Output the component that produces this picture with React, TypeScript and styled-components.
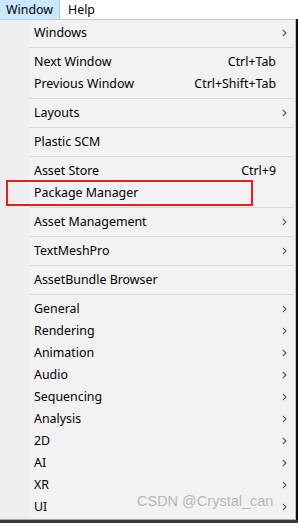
import styled, { createGlobalStyle } from "styled-components";

type Entry =
  | { kind: "item"; label: string; shortcut?: string; sub?: boolean; marked?: boolean }
  | { kind: "sep" };

const item = (label: string, opts: { shortcut?: string; sub?: boolean; marked?: boolean } = {}): Entry => ({
  kind: "item",
  label,
  ...opts,
});
const sep: Entry = { kind: "sep" };

const entries: Entry[] = [
  item("Windows", { sub: true }),
  sep,
  item("Next Window", { shortcut: "Ctrl+Tab" }),
  item("Previous Window", { shortcut: "Ctrl+Shift+Tab" }),
  sep,
  item("Layouts", { sub: true }),
  sep,
  item("Plastic SCM"),
  sep,
  item("Asset Store", { shortcut: "Ctrl+9" }),
  item("Package Manager", { marked: true }),
  sep,
  item("Asset Management", { sub: true }),
  sep,
  item("TextMeshPro", { sub: true }),
  sep,
  item("AssetBundle Browser"),
  sep,
  item("General", { sub: true }),
  item("Rendering", { sub: true }),
  item("Animation", { sub: true }),
  item("Audio", { sub: true }),
  item("Sequencing", { sub: true }),
  item("Analysis", { sub: true }),
  item("2D", { sub: true }),
  item("AI", { sub: true }),
  item("XR", { sub: true }),
  item("UI", { sub: true }),
];

const Chevron = () => (
  <svg width="5" height="8" viewBox="0 0 5 8">
    <path d="M0.8 0.8 L4 4 L0.8 7.2" fill="none" stroke="#555" strokeWidth="1.1" />
  </svg>
);

export default function App() {
  return (
    <>
      <GlobalStyle />
      <Screen>
        <MenuBar>
          <BarItem $active>Window</BarItem>
          <BarItem>Help</BarItem>
        </MenuBar>
        <Dropdown>
          {entries.map((e, i) =>
            e.kind === "sep" ? (
              <Separator key={i} />
            ) : (
              <Row key={i}>
                <Label>{e.label}</Label>
                {e.shortcut && <Shortcut>{e.shortcut}</Shortcut>}
                <Arrow>{e.sub && <Chevron />}</Arrow>
                {e.marked && <Highlight />}
              </Row>
            )
          )}
        </Dropdown>
        <Watermark>CSDN @Crystal_can</Watermark>
      </Screen>
    </>
  );
}

const GlobalStyle = createGlobalStyle`
  html, body {
    margin: 0;
    padding: 0;
    background: #2a2a2a;
  }
`;

const Screen = styled.div`
  position: relative;
  width: 298px;
  height: 523px;
  overflow: hidden;
  background: linear-gradient(to right, #f2f2f2 296px, #111 296px);
  font-family: "Noto Sans", "Open Sans", sans-serif;
  font-size: 12.4px;
  color: #000;
  display: flex;
  flex-direction: column;
  border-bottom: 3px solid #3a3a3a;
  box-sizing: border-box;
`;

const MenuBar = styled.div`
  height: 19px;
  background: #fff;
  display: flex;
  align-items: stretch;
`;

const BarItem = styled.div<{ $active?: boolean }>`
  display: flex;
  align-items: center;
  padding: 0 6px 0 6px;
  margin-right: 2px;
  width: ${(p) => (p.$active ? "47px" : "auto")};
  background: ${(p) => (p.$active ? "#cce8ff" : "transparent")};
  border-right: 1px solid ${(p) => (p.$active ? "#99d1ff" : "transparent")};
  line-height: 19px;
`;

const Dropdown = styled.div`
  width: 295px;
  border-top: 1px solid #cccccc;
  border-right: 1px solid #bcbcbc;
  border-bottom: 1px solid #a8a8a8;
  padding: 2px 0 1px;
  background: linear-gradient(to right, #efefef 30px, #f2f2f2 30px);
  display: flex;
  flex-direction: column;
`;

const Row = styled.div`
  position: relative;
  height: 22px;
  display: flex;
  align-items: center;
  padding-left: 34px;
`;

const Label = styled.span`
  flex: 1;
  white-space: nowrap;
  line-height: 22px;
  margin-top: -1px;
`;

const Shortcut = styled.span`
  white-space: nowrap;
  line-height: 22px;
  margin-top: -1px;
`;

const Arrow = styled.span`
  width: 19px;
  flex: none;
  display: flex;
  align-items: center;
  padding-left: 6px;
  box-sizing: border-box;
`;

const Separator = styled.div`
  height: 7px;
  margin: 0 2px 0 30px;
  background: linear-gradient(to bottom, transparent 3px, #d7d7d7 3px, #d7d7d7 4px, transparent 4px);
`;

const Highlight = styled.div`
  position: absolute;
  left: 6px;
  top: -2px;
  width: 243px;
  height: 22px;
  border: 2px solid #ee1c1c;
  pointer-events: none;
`;

const Watermark = styled.div`
  position: absolute;
  left: 137px;
  top: 493px;
  font-family: "Liberation Sans", Arial, sans-serif;
  font-size: 14.5px;
  color: rgba(160, 160, 160, 0.75);
  white-space: nowrap;
  pointer-events: none;
`;
